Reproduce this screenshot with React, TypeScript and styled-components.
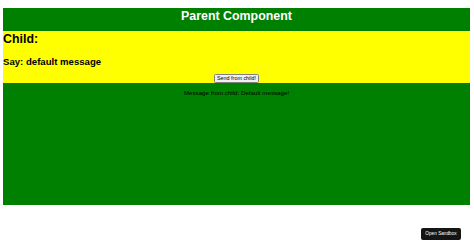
import React from "react";
import styled, { createGlobalStyle } from "styled-components";

const Global = createGlobalStyle`
  html, body { margin: 0; padding: 0; background: #ffffff; }
  body { font-family: "Liberation Sans", Arial, sans-serif; }
`;

const Page = styled.div`
  padding: 8px 4px 0 3px;
`;

const Parent = styled.div`
  background: #008000;
  height: 197px;
  display: flex;
  flex-direction: column;
`;

const Title = styled.h2`
  margin: 0;
  height: 23px;
  box-sizing: border-box;
  padding-bottom: 6px;
  line-height: 17px;
  font-size: 12.4px;
  font-weight: bold;
  color: #ffffff;
  text-align: center;
`;

const Child = styled.div`
  background: #ffff00;
  height: 52px;
  display: flex;
  flex-direction: column;
  color: #000000;
`;

const ChildHeading = styled.h2`
  margin: 0;
  font-size: 12.4px;
  line-height: 16px;
  font-weight: bold;
`;

const Say = styled.h3`
  margin: 8.5px 0 0;
  font-size: 9.6px;
  line-height: 11px;
  font-weight: bold;
`;

const SendButton = styled.button`
  align-self: center;
  margin-top: 7.5px;
  height: 9px;
  padding: 0 2px;
  font-family: "Liberation Sans", Arial, sans-serif;
  font-size: 5.4px;
  line-height: 7px;
  color: #000;
  background: #f0f0f0;
  border: 0.6px solid #808080;
  border-radius: 1.5px;
`;

const Message = styled.p`
  margin: 6px 0 0;
  font-size: 6.2px;
  line-height: 7px;
  text-align: center;
  color: #000;
`;

const SandboxButton = styled.button`
  position: fixed;
  right: 13px;
  bottom: 8px;
  width: 40px;
  height: 12px;
  padding: 0;
  border: none;
  border-radius: 2px;
  background: #151515;
  color: #ffffff;
  font-family: "Liberation Sans", Arial, sans-serif;
  font-size: 4.7px;
  line-height: 12px;
  text-align: center;
`;

export default function App() {
  return (
    <Page>
      <Global />
      <Parent>
        <Title>Parent Component</Title>
        <Child>
          <ChildHeading>Child:</ChildHeading>
          <Say>Say: default message</Say>
          <SendButton>Send from child!</SendButton>
        </Child>
        <Message>Message from child: Default message!</Message>
      </Parent>
      <SandboxButton>Open Sandbox</SandboxButton>
    </Page>
  );
}
